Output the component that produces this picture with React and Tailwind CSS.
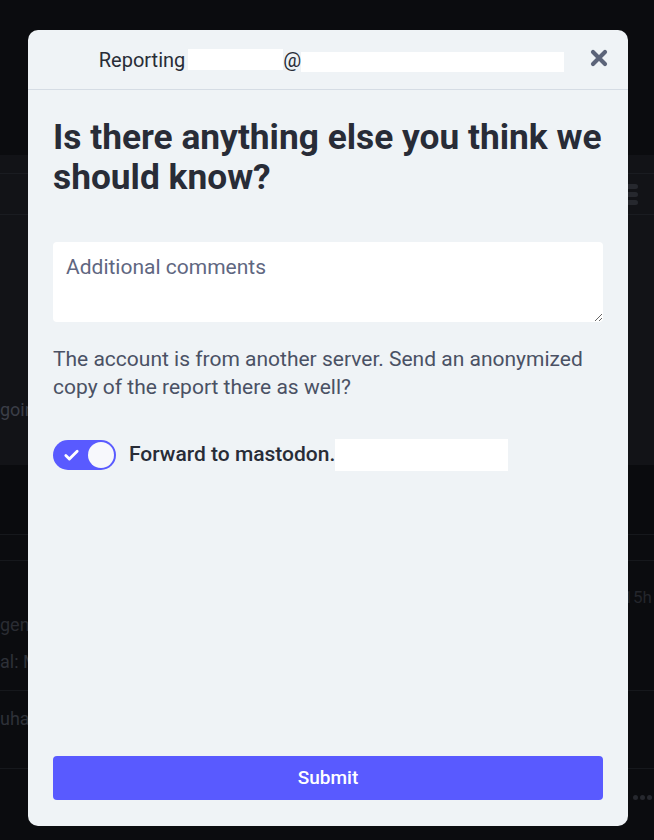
import { Check } from 'lucide-react'

const Backdrop = () => (
  <div className="min-h-[840px] w-full bg-[#0b0c0f] text-[#3a3d46] font-['Roboto','Liberation_Sans',sans-serif] text-[18px] overflow-hidden">
    <div className="h-[155px]" />
    {/* column panel behind */}
    <div className="h-[310px] bg-[#121317] flex flex-col">
      <div className="h-[18px]" />
      <div className="h-[42px] border-y border-[#1a1c21] flex justify-end items-center pr-[8px]">
        <div className="flex flex-col gap-[3px] mr-[8px]">
          <div className="w-[14px] h-[5px] bg-[#26282e] rounded-sm" />
          <div className="w-[14px] h-[5px] bg-[#26282e] rounded-sm" />
          <div className="w-[14px] h-[5px] bg-[#26282e] rounded-sm" />
        </div>
      </div>
      <div className="flex-1 flex items-end pb-[42px]">
        <span className="text-[#3b3e47]">going</span>
      </div>
    </div>
    <div className="h-[69px] bg-[#0a0b0e]" />
    <div className="border-t border-[#16181c]" />
    <div className="h-[25px]" />
    <div className="border-t border-[#16181c] h-[130px] flex flex-col">
      <div className="flex justify-end pt-[24px] pr-[2px]">
        <span className="text-[#24262c] text-[17px]">15h</span>
      </div>
      <span className="mt-[0px] text-[#2a2c33]">gen</span>
      <span className="mt-[10px] text-[#2e3138]">al: M</span>
    </div>
    <div className="border-t border-[#16181c] h-[78px] pt-[14px]">
      <span className="text-[#2e3138]">uhak</span>
    </div>
    <div className="border-t border-[#16181c] flex justify-end pt-[26px] pr-[2px] gap-[2px]">
      <div className="w-[5px] h-[5px] rounded-full bg-[#26282e]" />
      <div className="w-[5px] h-[5px] rounded-full bg-[#26282e]" />
      <div className="w-[5px] h-[5px] rounded-full bg-[#26282e]" />
    </div>
  </div>
)

const App = () => {
  return (
    <div className="relative w-full min-h-[840px] font-['Roboto','Liberation_Sans',sans-serif]">
      <Backdrop />

      {/* modal */}
      <div className="absolute left-[28px] top-[30px] w-[600px] h-[796px] bg-[#eff3f6] rounded-[10px] flex flex-col overflow-hidden">
        <div className="h-[60px] shrink-0 border-b border-[#d5dce4] relative flex items-center justify-center">
          <div className="flex items-center text-[20px] text-[#282c37] ml-[7px]">
            <span>Reporting</span>
            <span className="w-[95px] h-[21px] bg-white ml-[3px] -mt-[1px]" />
            <span>@</span>
            <span className="w-[263px] h-[20px] bg-white mt-[5px]" />
          </div>
          <button className="absolute right-[19px] top-[18px] w-[20px] h-[20px] flex items-center justify-center">
            <svg width="18" height="18" viewBox="0 0 18 18">
              <path d="M3 3 L15 15 M15 3 L3 15" stroke="#5c6479" strokeWidth="4.2" strokeLinecap="round" />
            </svg>
          </button>
        </div>

        <div className="flex-1 flex flex-col px-[25px] pb-[26px]">
          <h1 className="mt-[27px] text-[35.3px] leading-[40px] font-bold text-[#282c37]">
            Is there anything else you think we should know?
          </h1>

          <textarea
            placeholder="Additional comments"
            className="mt-[45px] h-[80px] w-full bg-white rounded-[4px] px-[13px] py-[11px] text-[21px] leading-[28px] text-[#282c37] placeholder:text-[#5f6781] outline-none resize-y"
          />

          <p className="mt-[23px] text-[21px] leading-[28px] text-[#4a5164]">
            The account is from another server. Send an anonymized copy of the report there as well?
          </p>

          <div className="mt-[38px] flex items-center">
            <div className="w-[63px] h-[30px] rounded-full bg-[#595aff] relative flex items-center">
              <Check size={17} strokeWidth={4} className="text-white ml-[10px]" />
              <div className="absolute right-[2px] top-[2px] w-[26px] h-[26px] rounded-full bg-[#f7f8fc]" />
            </div>
            <span className="ml-[13px] text-[21px] font-medium text-[#282c37]">Forward to mastodon.</span>
            <span className="w-[173px] h-[32px] bg-white" />
          </div>

          <button className="mt-auto h-[44px] w-full rounded-[4px] bg-[#595aff] text-white text-[19px] font-medium">
            Submit
          </button>
        </div>
      </div>
    </div>
  )
}

export default App
